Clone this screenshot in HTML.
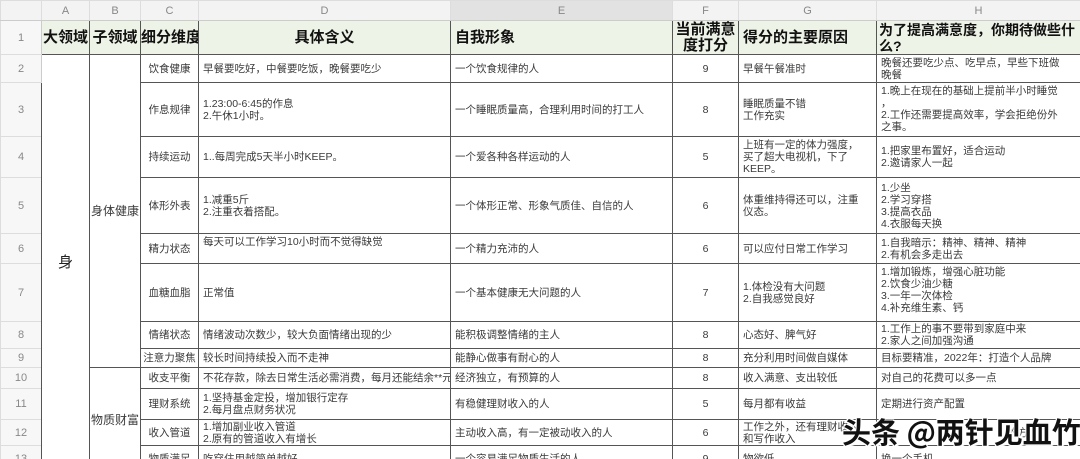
<!DOCTYPE html>
<html><head><meta charset="utf-8"><style>
html,body{margin:0;padding:0;width:1080px;height:459px;overflow:hidden;background:#fff;}
body{position:relative;font-family:"Liberation Sans","Noto Sans CJK SC",sans-serif;}
table{border-collapse:collapse;table-layout:fixed;position:absolute;left:0;top:0;width:1080px;}
td{padding:0 4px;font-size:10.5px;color:#3a3a3a;line-height:12px;overflow:hidden;vertical-align:middle;border:1px solid #555;white-space:nowrap;}
tr.ch td{background:#f3f3f3;color:#888;text-align:center;font-size:11px;border:1px solid #ddd;border-bottom:1px solid #ccc;}
tr.ch td.sel{background:#e2e2e2;}
td.rn{background:#f7f7f7;color:#888;text-align:center;border:1px solid #ddd;border-right:1px solid #ccc;font-size:11px;}
tr.h1 td.hd{background:#eef3e7;font-weight:bold;color:#111;font-size:15px;line-height:16px;}
.c{text-align:center;}
.t{vertical-align:top;padding-top:2px;}
.wm{position:absolute;left:842px;top:410px;font-size:29px;font-weight:bold;color:#111;font-family:"Noto Sans CJK SC",sans-serif;text-shadow:-1px -1px 0 #fff,1px -1px 0 #fff,-1px 1px 0 #fff,1px 1px 0 #fff,2px 2px 1px #fff;white-space:nowrap;}
</style></head><body>
<table>
<colgroup><col style="width:41px"><col style="width:48px"><col style="width:51px"><col style="width:58px"><col style="width:252px"><col style="width:222px"><col style="width:66px"><col style="width:138px"><col style="width:204px"></colgroup>
<tr class="ch" style="height:20px"><td></td><td>A</td><td>B</td><td>C</td><td>D</td><td class="sel">E</td><td>F</td><td>G</td><td>H</td></tr>
<tr class="h1" style="height:34px"><td class="rn">1</td><td class="hd c" style="padding:0">大领域</td><td class="hd c" style="padding:0">子领域</td><td class="hd c" style="padding:0">细分维度</td><td class="hd c">具体含义</td><td class="hd">自我形象</td><td class="hd c" style="padding:0">当前满意<br>度打分</td><td class="hd">得分的主要原因</td><td class="hd" style="padding:0 2px;font-size:14px">为了提高满意度，你期待做些什<br>么?</td></tr>
<tr style="height:28px"><td class="rn">2</td><td rowspan="12" class="c" style="font-size:15px;color:#222">身</td><td rowspan="8" class="c" style="font-size:12px;padding:0">身体健康</td><td class="c">饮食健康</td><td>早餐要吃好，中餐要吃饭，晚餐要吃少</td><td>一个饮食规律的人</td><td class="c">9</td><td>早餐午餐准时</td><td class="t">晚餐还要吃少点、吃早点，早些下班做<br>晚餐</td></tr>
<tr style="height:54px"><td class="rn">3</td><td class="c">作息规律</td><td>1.23:00-6:45的作息<br>2.午休1小时。</td><td>一个睡眠质量高，合理利用时间的打工人</td><td class="c">8</td><td>睡眠质量不错<br>工作充实</td><td class="t">1.晚上在现在的基础上提前半小时睡觉<br>，<br>2.工作还需要提高效率，学会拒绝份外<br>之事。</td></tr>
<tr style="height:41px"><td class="rn">4</td><td class="c">持续运动</td><td>1..每周完成5天半小时KEEP。</td><td>一个爱各种各样运动的人</td><td class="c">5</td><td>上班有一定的体力强度，<br>买了超大电视机，下了<br>KEEP。</td><td>1.把家里布置好，适合运动<br>2.邀请家人一起</td></tr>
<tr style="height:56px"><td class="rn">5</td><td class="c">体形外表</td><td>1.减重5斤<br>2.注重衣着搭配。</td><td>一个体形正常、形象气质佳、自信的人</td><td class="c">6</td><td>体重维持得还可以，注重<br>仪态。</td><td>1.少坐<br>2.学习穿搭<br>3.提高衣品<br>4.衣服每天换</td></tr>
<tr style="height:30px"><td class="rn">6</td><td class="c">精力状态</td><td class="t">每天可以工作学习10小时而不觉得缺觉</td><td>一个精力充沛的人</td><td class="c">6</td><td>可以应付日常工作学习</td><td>1.自我暗示：精神、精神、精神<br>2.有机会多走出去</td></tr>
<tr style="height:58px"><td class="rn">7</td><td class="c">血糖血脂</td><td>正常值</td><td>一个基本健康无大问题的人</td><td class="c">7</td><td>1.体检没有大问题<br>2.自我感觉良好</td><td class="t">1.增加锻炼，增强心脏功能<br>2.饮食少油少糖<br>3.一年一次体检<br>4.补充维生素、钙</td></tr>
<tr style="height:27px"><td class="rn">8</td><td class="c">情绪状态</td><td>情绪波动次数少，较大负面情绪出现的少</td><td>能积极调整情绪的主人</td><td class="c">8</td><td>心态好、脾气好</td><td>1.工作上的事不要带到家庭中来<br>2.家人之间加强沟通</td></tr>
<tr style="height:19px"><td class="rn">9</td><td class="c" style="padding:0">注意力聚焦</td><td>较长时间持续投入而不走神</td><td>能静心做事有耐心的人</td><td class="c">8</td><td>充分利用时间做自媒体</td><td>目标要精准，2022年：打造个人品牌</td></tr>
<tr style="height:21px"><td class="rn">10</td><td rowspan="4" class="c" style="font-size:12px;padding:0">物质财富</td><td class="c">收支平衡</td><td>不花存款，除去日常生活必需消费，每月还能结余**元</td><td>经济独立，有预算的人</td><td class="c">8</td><td>收入满意、支出较低</td><td>对自己的花费可以多一点</td></tr>
<tr style="height:31px"><td class="rn">11</td><td class="c">理财系统</td><td>1.坚持基金定投，增加银行定存<br>2.每月盘点财务状况</td><td>有稳健理财收入的人</td><td class="c">5</td><td>每月都有收益</td><td>定期进行资产配置</td></tr>
<tr style="height:26px"><td class="rn">12</td><td class="c">收入管道</td><td>1.增加副业收入管道<br>2.原有的管道收入有增长</td><td>主动收入高，有一定被动收入的人</td><td class="c">6</td><td>工作之外，还有理财收入<br>和写作收入</td><td>　　　　　　　　　　　　的方</td></tr>
<tr style="height:26px"><td class="rn">13</td><td class="c">物质满足</td><td>吃穿住用越简单越好</td><td>一个容易满足物质生活的人</td><td class="c">9</td><td>物欲低</td><td>换一个手机</td></tr>
</table>
<div class="wm">头条 @两针见血竹</div>
</body></html>
